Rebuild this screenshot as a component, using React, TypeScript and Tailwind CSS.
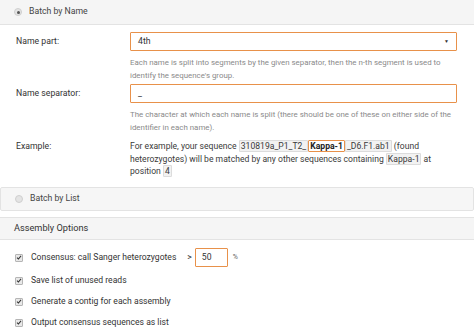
import React from 'react';

function Radio({ checked }: { checked?: boolean }) {
  return (
    <span className="inline-flex h-[8px] w-[8px] items-center justify-center rounded-full border border-[#cfcfcf] bg-[#e4e4e4]">
      {checked && <span className="h-[3px] w-[3px] rounded-full bg-[#555]" />}
    </span>
  );
}

function Check() {
  return (
    <span className="inline-flex h-[8px] w-[8px] shrink-0 items-center justify-center rounded-[1px] border border-[#b5b5b5] bg-[#e8e8e8]">
      <svg viewBox="0 0 8 8" className="h-[7px] w-[7px]">
        <path d="M1.3 4.2 L3.2 6 L6.7 1.8" fill="none" stroke="#333" strokeWidth="1.4" />
      </svg>
    </span>
  );
}

function Code({ children, hot }: { children: React.ReactNode; hot?: boolean }) {
  return (
    <span
      className={`rounded-[1px] border px-px ${
        hot ? 'border-[#e8914a] bg-white font-bold text-[#222]' : 'border-[#dcdcdc] bg-[#f2f2f2]'
      }`}
    >
      {children}
    </span>
  );
}

export default function App() {
  const options = [
    'Save list of unused reads',
    'Generate a contig for each assembly',
    'Output consensus sequences as list',
  ];

  return (
    <div className="h-[335px] w-[474px] overflow-hidden bg-white font-['Roboto',sans-serif] text-[#333]">
      {/* Batch by Name */}
      <div className="flex h-[25px] items-center gap-[7px] border-b border-[#e3e3e3] bg-[#f5f5f5] pl-[14px] text-[8.7px] text-[#444]">
        <Radio checked />
        <span>Batch by Name</span>
      </div>

      <div className="pr-[17px] pt-[7px]">
        <div className="flex items-center">
          <span className="w-[130px] pl-[16px] text-[8.7px]">Name part:</span>
          <div className="flex h-[19px] flex-1 items-center justify-between rounded-[1px] border border-[#e8914a] px-[7px] text-[8.7px]">
            <span>4th</span>
            <span className="text-[5px] text-[#333]">▼</span>
          </div>
        </div>
        <p className="ml-[130px] mt-[5px] whitespace-nowrap text-[7.9px] leading-[13px] text-[#8a8a8a]">
          Each name is split into segments by the given separator, then the n-th segment is used to
          <br />
          identify the sequence's group.
        </p>

        <div className="mt-[2px] flex items-center">
          <span className="w-[130px] pl-[16px] text-[8.7px]">Name separator:</span>
          <div className="flex h-[19px] flex-1 items-center rounded-[1px] border border-[#e8914a] px-[7px] text-[8.7px]">
            _
          </div>
        </div>
        <p className="ml-[130px] mt-[5px] whitespace-nowrap text-[7.9px] leading-[13px] text-[#8a8a8a]">
          The character at which each name is split (there should be one of these on either side of the
          <br />
          identifier in each name).
        </p>

        <div className="mt-[6px] flex">
          <span className="w-[130px] shrink-0 pl-[16px] text-[8.7px] leading-[12.5px]">Example:</span>
          <p className="whitespace-nowrap text-[8.6px] leading-[12.5px] text-[#3a3a3a]">
            For example, your sequence <Code>310819a_P1_T2_</Code>
            <Code hot>Kappa-1</Code>
            <Code>_D6.F1.ab1</Code> (found
            <br />
            heterozygotes) will be matched by any other sequences containing <Code>Kappa-1</Code> at
            <br />
            position <Code>4</Code>
          </p>
        </div>
      </div>

      {/* Batch by List */}
      <div className="mt-[9px] flex h-[24px] items-center gap-[7px] rounded-[2px] border border-[#e3e3e3] bg-[#f6f6f6] pl-[14px] text-[8.7px] text-[#444]">
        <Radio />
        <span>Batch by List</span>
      </div>

      {/* Assembly Options */}
      <div className="mt-[6px] flex h-[23px] items-center border-y border-[#e3e3e3] bg-[#f5f5f5] pl-[14px] text-[9.2px] text-[#333]">
        Assembly Options
      </div>

      <div className="flex flex-col gap-[6px] pl-[15px] pt-[8.5px] text-[8.6px] text-[#333]">
        <div className="flex h-[19px] items-center">
          <Check />
          <span className="ml-[8px]">Consensus: call Sanger heterozygotes</span>
          <span className="ml-[11px]">&gt;</span>
          <span className="ml-[3px] flex h-[19px] w-[33px] items-center rounded-[1px] border border-[#e8914a] px-[6px]">
            50
          </span>
          <span className="ml-[5px] text-[7px] text-[#666]">%</span>
        </div>
        {options.map((label) => (
          <div key={label} className="flex h-[15px] items-center">
            <Check />
            <span className="ml-[8px]">{label}</span>
          </div>
        ))}
      </div>
    </div>
  );
}
